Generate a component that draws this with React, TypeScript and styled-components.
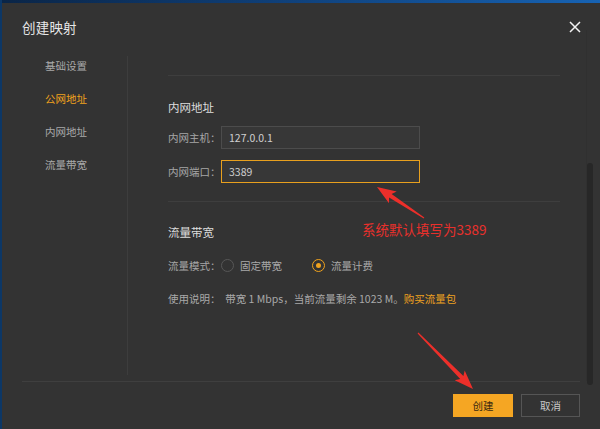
import React from "react";
import styled, { createGlobalStyle } from "styled-components";

const Global = createGlobalStyle`
  html, body { margin: 0; padding: 0; background: #333333; }
  body { font-family: "Noto Sans CJK SC", "Microsoft YaHei", sans-serif; }
  * { box-sizing: border-box; }
`;

const Dialog = styled.div`
  position: relative;
  width: 600px;
  height: 429px;
  background: #333333;
  border-left: 2px solid #0c3766;
  display: flex;
  flex-direction: column;
  overflow: hidden;
`;

const TopStrip = styled.div`
  height: 3px;
  flex: none;
  background: linear-gradient(90deg, #0a2547 0%, #0f3f78 45%, #1763b4 100%);
`;

const Header = styled.div`
  height: 47px;
  flex: none;
  display: flex;
  align-items: center;
  justify-content: space-between;
  padding: 0 19px 0 20px;
`;

const Title = styled.div`
  font-size: 13.5px;
  color: #e6e6e6;
  letter-spacing: 0.2px;
`;

const Close = styled.div`
  width: 12px;
  height: 12px;
  display: flex;
  align-items: center;
  justify-content: center;
`;

const Body = styled.div`
  height: 331px;
  flex: none;
  display: flex;
  position: relative;
`;

const Sidebar = styled.div`
  width: 126px;
  flex: none;
  margin: 6px 0;
  border-right: 1px solid #3d3d3d;
  padding-left: 43px;
  display: flex;
  flex-direction: column;
  gap: 13px;
`;

const NavItem = styled.div<{ $active?: boolean }>`
  height: 20px;
  line-height: 20px;
  font-size: 10.5px;
  color: ${(p) => (p.$active ? "#f0a21d" : "#a9a9a9")};
`;

const Content = styled.div`
  flex: 1;
  padding: 25px 40px 0 40px;
  display: flex;
  flex-direction: column;
`;

const Rule = styled.div<{ $mt?: number }>`
  height: 1px;
  background: #3e3e3e;
  margin-top: ${(p) => p.$mt ?? 0}px;
`;

const Heading = styled.div<{ $mt: number }>`
  margin-top: ${(p) => p.$mt}px;
  height: 20px;
  line-height: 20px;
  font-size: 11.5px;
  color: #dedede;
`;

const Row = styled.div<{ $mt: number }>`
  margin-top: ${(p) => p.$mt}px;
  display: flex;
  align-items: center;
  min-height: 20px;
  font-size: 10.5px;
  color: #a6a6a6;
`;

const Label = styled.div`
  width: 53px;
  flex: none;
  white-space: nowrap;
`;

const Input = styled.div<{ $focus?: boolean }>`
  width: 199px;
  height: 23px;
  border: 1px solid ${(p) => (p.$focus ? "#e8a01e" : "#4c4c4c")};
  background: #373737;
  color: #cfcfcf;
  font-size: 10.5px;
  padding-left: 7px;
  display: flex;
  align-items: center;
`;

const RadioOption = styled.div`
  display: flex;
  align-items: center;
  margin-right: 30px;
  color: #a9a9a9;
`;

const RadioCircle = styled.div<{ $on?: boolean }>`
  width: 13px;
  height: 13px;
  border-radius: 50%;
  border: 1px solid ${(p) => (p.$on ? "#f0a21d" : "#575757")};
  margin-right: 6px;
  display: flex;
  align-items: center;
  justify-content: center;
  &::after {
    content: "";
    display: ${(p) => (p.$on ? "block" : "none")};
    width: 5px;
    height: 5px;
    border-radius: 50%;
    background: #f0a21d;
  }
`;

const Text = styled.span`
  white-space: pre;
  color: #a9a9a9;
`;

const Link = styled.span`
  color: #eea120;
`;

const ScrollThumb = styled.div`
  position: absolute;
  right: 7px;
  top: 113px;
  width: 6px;
  bottom: -4px;
  border-radius: 3px;
  background: #272727;
`;

const ScrollTrack = styled.div`
  position: absolute;
  right: 13px;
  top: -20px;
  width: 1px;
  bottom: 0;
  background: #303030;
`;

const Footer = styled.div`
  margin: 0 20px;
  border-top: 1px solid #3f3f3f;
  padding-top: 12px;
  display: flex;
  justify-content: flex-end;
  gap: 8px;
`;

const Button = styled.div<{ $primary?: boolean }>`
  width: ${(p) => (p.$primary ? 60 : 59)}px;
  height: 23px;
  display: flex;
  align-items: center;
  justify-content: center;
  font-size: 10.5px;
  background: ${(p) => (p.$primary ? "#f5a623" : "transparent")};
  border: 1px solid ${(p) => (p.$primary ? "#f5a623" : "#555555")};
  color: ${(p) => (p.$primary ? "#3a2a10" : "#c8c8c8")};
`;

const Annotation = styled.div`
  position: absolute;
  left: 360px;
  top: 219px;
  font-size: 13.5px;
  color: #e8302c;
  white-space: nowrap;
`;

const Overlay = styled.svg`
  position: absolute;
  left: -2px;
  top: 0;
  pointer-events: none;
`;

function arrowPoints(tx: number, ty: number, px: number, py: number) {
  const dx = px - tx;
  const dy = py - ty;
  const L = Math.hypot(dx, dy);
  const ux = dx / L;
  const uy = dy / L;
  const nx = -uy;
  const ny = ux;
  const h = 16;
  const bx = px - ux * h;
  const by = py - uy * h;
  const b2x = px - ux * (h + 3);
  const b2y = py - uy * (h + 3);
  const pts: [number, number][] = [
    [tx + nx * 0.5, ty + ny * 0.5],
    [bx + nx * 2.2, by + ny * 2.2],
    [b2x + nx * 7, b2y + ny * 7],
    [px, py],
    [b2x - nx * 7, b2y - ny * 7],
    [bx - nx * 2.2, by - ny * 2.2],
    [tx - nx * 0.5, ty - ny * 0.5],
  ];
  return pts.map((p) => p.map((v) => v.toFixed(1)).join(",")).join(" ");
}

export default function App() {
  return (
    <>
      <Global />
      <Dialog>
        <TopStrip />
        <Header>
          <Title>创建映射</Title>
          <Close>
            <svg width="12" height="12" viewBox="0 0 12 12">
              <path d="M1 1 L11 11 M11 1 L1 11" stroke="#f2f2f2" strokeWidth="1.5" />
            </svg>
          </Close>
        </Header>
        <Body>
          <Sidebar>
            <NavItem>基础设置</NavItem>
            <NavItem $active>公网地址</NavItem>
            <NavItem>内网地址</NavItem>
            <NavItem>流量带宽</NavItem>
          </Sidebar>
          <Content>
            <Rule />
            <Heading $mt={21}>内网地址</Heading>
            <Row $mt={9}>
              <Label>内网主机：</Label>
              <Input>127.0.0.1</Input>
            </Row>
            <Row $mt={11}>
              <Label>内网端口：</Label>
              <Input $focus>3389</Input>
            </Row>
            <Rule $mt={18} />
            <Heading $mt={20}>流量带宽</Heading>
            <Row $mt={13}>
              <Label>流量模式：</Label>
              <RadioOption>
                <RadioCircle />
                固定带宽
              </RadioOption>
              <RadioOption>
                <RadioCircle $on />
                流量计费
              </RadioOption>
            </Row>
            <Row $mt={13}>
              <Text>使用说明：  带宽 1 Mbps，当前流量剩余 1023 M。</Text>
              <Link>购买流量包</Link>
            </Row>
          </Content>
          <ScrollTrack />
          <ScrollThumb />
        </Body>
        <Footer>
          <Button $primary>创建</Button>
          <Button>取消</Button>
        </Footer>
        <Annotation>系统默认填写为3389</Annotation>
        <Overlay width="600" height="429" viewBox="0 0 600 429">
          <polygon points={arrowPoints(424, 218, 377, 187)} fill="#ec2f2a" />
          <polygon points={arrowPoints(418, 333, 473, 389)} fill="#ec2f2a" />
        </Overlay>
      </Dialog>
    </>
  );
}
